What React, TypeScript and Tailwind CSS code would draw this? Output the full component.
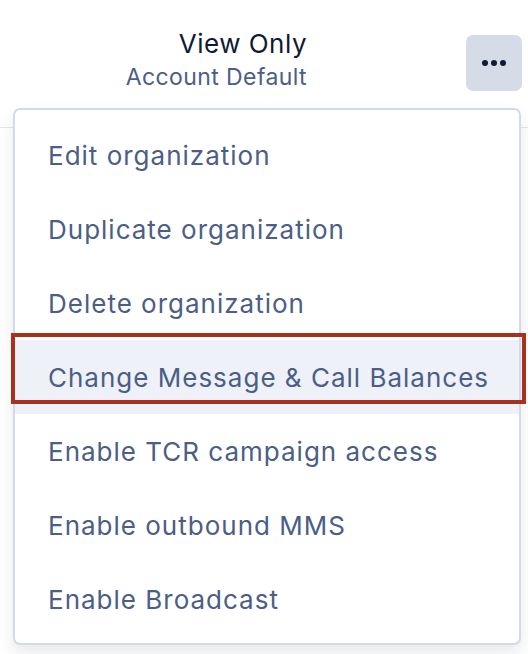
const items = [
  "Edit organization",
  "Duplicate organization",
  "Delete organization",
  "Change Message & Call Balances",
  "Enable TCR campaign access",
  "Enable outbound MMS",
  "Enable Broadcast",
];

export default function App() {
  return (
    <div className="relative w-[528px] h-[654px] bg-white font-['Inter',sans-serif] overflow-hidden">
      <div className="flex items-start justify-between pt-[26px] pr-[6px] h-[128px] border-b border-[#e2e6ee]">
        <div className="w-[307px] flex flex-col items-end">
          <p className="text-[26px] leading-[36px] tracking-[0.5px] text-[#0f1a33]">View Only</p>
          <p className="text-[23px] leading-[34px] tracking-[0.4px] text-[#4b5e85] mt-[-2px]">Account Default</p>
        </div>
        <button className="mt-[9px] w-[56px] h-[56px] rounded-[7px] bg-[#d6dce7] flex items-center justify-center gap-[3px]">
          <span className="w-[6px] h-[6px] rounded-full bg-[#0f1a33]" />
          <span className="w-[6px] h-[6px] rounded-full bg-[#0f1a33]" />
          <span className="w-[6px] h-[6px] rounded-full bg-[#0f1a33]" />
        </button>
      </div>

      <div className="absolute left-[13px] top-[108px] w-[508px] h-[537px] bg-white border-2 border-[#d3d9e6] rounded-[7px] shadow-[0_8px_16px_rgba(30,40,70,0.10)] pt-[8px]">
        {items.map((item, i) => (
          <div
            key={item}
            className={`h-[74px] flex items-center pl-[33px] text-[26px] tracking-[1px] text-[#4b5e85] ${i === 3 ? "bg-[#eef1f8]" : ""}`}
          >
            {item}
          </div>
        ))}
      </div>

      <div className="absolute left-[11px] top-[333px] w-[515px] h-[71px] border-[4px] border-[#a8301f]" />
    </div>
  );
}
